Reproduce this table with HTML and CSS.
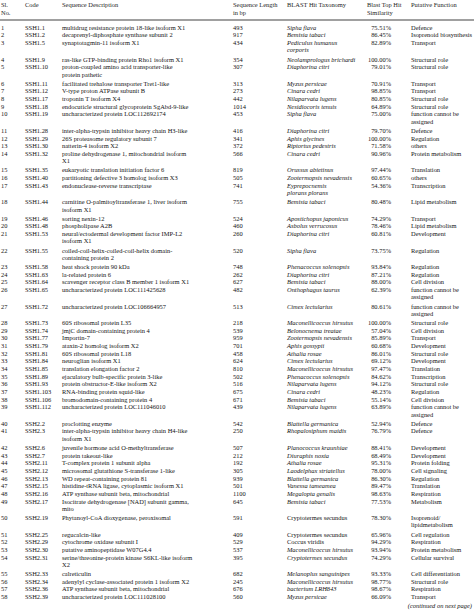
FILE: index.html
```html
<!DOCTYPE html>
<html>
<head>
<meta charset="utf-8">
<link rel="stylesheet" href="styles.css">
</head>
<body>
<div class="tbl">
  <div class="row head">
    <div>Sl.<br>No.</div><div>Code</div><div>Sequence Description</div><div>Sequence Length<br>in bp</div><div>BLAST Hit Taxonomy</div><div class="simh">Blast Top Hit<br>Similarity</div><div>Putative Function</div>
  </div>
  <div class="rule"></div>
  <div class="body">
    <div class="row"><div>1</div><div>SSH1.1</div><div>multidrug resistance protein 18-like isoform X1</div><div>493</div><div class="tx">Sipha flava</div><div class="sim">75.51%</div><div>Defence</div></div>
    <div class="row"><div>2</div><div>SSH1.2</div><div>decaprenyl-diphosphate synthase subunit 2</div><div>917</div><div class="tx">Bemisia tabaci</div><div class="sim">86.45%</div><div>Isoprenoid biosynthesis</div></div>
    <div class="row two"><div>3</div><div>SSH1.5</div><div>synaptotagmin-11 isoform X1</div><div>434</div><div class="tx">Pediculus humanus<br>corporis</div><div class="sim">82.89%</div><div>Transport</div></div>
    <div class="row"><div>4</div><div>SSH1.9</div><div>ras-like GTP-binding protein Rho1 isoform X1</div><div>354</div><div class="tx">Neolamprologus brichardi</div><div class="sim">100.00%</div><div>Structural role</div></div>
    <div class="row two"><div>5</div><div>SSH1.10</div><div>proton-coupled amino acid transporter-like<br>protein pathetic</div><div>307</div><div class="tx">Diaphorina citri</div><div class="sim">79.01%</div><div>Structural role</div></div>
    <div class="row"><div>6</div><div>SSH1.11</div><div>facilitated trehalose transporter Tret1-like</div><div>313</div><div class="tx">Myzus persicae</div><div class="sim">70.91%</div><div>Transport</div></div>
    <div class="row"><div>7</div><div>SSH1.12</div><div>V-type proton ATPase subunit B</div><div>273</div><div class="tx">Cinara cedri</div><div class="sim">98.85%</div><div>Transport</div></div>
    <div class="row"><div>8</div><div>SSH1.17</div><div>troponin T isoform X4</div><div>442</div><div class="tx">Nilaparvata lugens</div><div class="sim">80.85%</div><div>Structural role</div></div>
    <div class="row"><div>9</div><div>SSH1.18</div><div>endocuticle structural glycoprotein SgAbd-9-like</div><div>1014</div><div class="tx">Nesidiocoris tenuis</div><div class="sim">64.89%</div><div>Structural role</div></div>
    <div class="row two"><div>10</div><div>SSH1.19</div><div>uncharacterized protein LOC112692174</div><div>453</div><div class="tx">Sipha flava</div><div class="sim">75.00%</div><div>function cannot be<br>assigned</div></div>
    <div class="row"><div>11</div><div>SSH1.28</div><div>inter-alpha-trypsin inhibitor heavy chain H3-like</div><div>416</div><div class="tx">Diaphorina citri</div><div class="sim">79.70%</div><div>Defence</div></div>
    <div class="row"><div>12</div><div>SSH1.29</div><div>26S proteasome regulatory subunit 7</div><div>341</div><div class="tx">Aphis glycines</div><div class="sim">100.00%</div><div>Regulation</div></div>
    <div class="row"><div>13</div><div>SSH1.30</div><div>natterin-4 isoform X2</div><div>372</div><div class="tx">Riptortus pedestris</div><div class="sim">71.58%</div><div>others</div></div>
    <div class="row two"><div>14</div><div>SSH1.32</div><div>proline dehydrogenase 1, mitochondrial isoform<br>X1</div><div>566</div><div class="tx">Cinara cedri</div><div class="sim">90.96%</div><div>Protein metabolism</div></div>
    <div class="row"><div>15</div><div>SSH1.35</div><div>eukaryotic translation initiation factor 6</div><div>819</div><div class="tx">Orussus abietinus</div><div class="sim">97.44%</div><div>Translation</div></div>
    <div class="row"><div>16</div><div>SSH1.40</div><div>partitioning defective 3 homolog isoform X3</div><div>505</div><div class="tx">Zootermopsis nevadensis</div><div class="sim">60.65%</div><div>others</div></div>
    <div class="row two"><div>17</div><div>SSH1.43</div><div>endonuclease-reverse transcriptase</div><div>741</div><div class="tx">Eyprepocnemis<br>plorans plorans</div><div class="sim">54.36%</div><div>Transcription</div></div>
    <div class="row two"><div>18</div><div>SSH1.44</div><div>carnitine O-palmitoyltransferase 1, liver isoform<br>isoform X1</div><div>755</div><div class="tx">Bemisia tabaci</div><div class="sim">80.48%</div><div>Lipid metabolism</div></div>
    <div class="row"><div>19</div><div>SSH1.46</div><div>sorting nexin-12</div><div>524</div><div class="tx">Apostichopus japonicus</div><div class="sim">74.29%</div><div>Transport</div></div>
    <div class="row"><div>20</div><div>SSH1.48</div><div>phospholipase A2B</div><div>460</div><div class="tx">Asbolus verrucosus</div><div class="sim">78.46%</div><div>Lipid metabolism</div></div>
    <div class="row two"><div>21</div><div>SSH1.53</div><div>neural/ectodermal development factor IMP-L2<br>isoform X1</div><div>260</div><div class="tx">Diaphorina citri</div><div class="sim">60.81%</div><div>Development</div></div>
    <div class="row two"><div>22</div><div>SSH1.55</div><div>coiled-coil-helix-coiled-coil-helix domain-<br>containing protein 2</div><div>520</div><div class="tx">Sipha flava</div><div class="sim">73.75%</div><div>Regulation</div></div>
    <div class="row"><div>23</div><div>SSH1.58</div><div>heat shock protein 90 kDa</div><div>748</div><div class="tx">Phenacoccus solenopsis</div><div class="sim">93.84%</div><div>Regulation</div></div>
    <div class="row"><div>24</div><div>SSH1.63</div><div>la-related protein 6</div><div>262</div><div class="tx">Diaphorina citri</div><div class="sim">87.21%</div><div>Regulation</div></div>
    <div class="row"><div>25</div><div>SSH1.64</div><div>scavenger receptor class B member 1 isoform X1</div><div>627</div><div class="tx">Bemisia tabaci</div><div class="sim">88.00%</div><div>Cell division</div></div>
    <div class="row two"><div>26</div><div>SSH1.65</div><div>uncharacterized protein LOC111425628</div><div>482</div><div class="tx">Onthophagus taurus</div><div class="sim">62.39%</div><div>function cannot be<br>assigned</div></div>
    <div class="row two"><div>27</div><div>SSH1.72</div><div>uncharacterized protein LOC106664957</div><div>513</div><div class="tx">Cimex lectularius</div><div class="sim">80.61%</div><div>function cannot be<br>assigned</div></div>
    <div class="row"><div>28</div><div>SSH1.73</div><div>60S ribosomal protein L35</div><div>218</div><div class="tx">Maconellicoccus hirsutus</div><div class="sim">100.00%</div><div>Structural role</div></div>
    <div class="row"><div>29</div><div>SSH1.74</div><div>jmjC domain-containing protein 4</div><div>539</div><div class="tx">Belonocnema treatae</div><div class="sim">57.04%</div><div>Cell division</div></div>
    <div class="row"><div>30</div><div>SSH1.77</div><div>Importin-7</div><div>959</div><div class="tx">Zootermopsis nevadensis</div><div class="sim">85.89%</div><div>Transport</div></div>
    <div class="row"><div>31</div><div>SSH1.79</div><div>ataxin-2 homolog isoform X2</div><div>701</div><div class="tx">Aphis gossypii</div><div class="sim">60.68%</div><div>Development</div></div>
    <div class="row"><div>32</div><div>SSH1.81</div><div>60S ribosomal protein L18</div><div>458</div><div class="tx">Athalia rosae</div><div class="sim">86.01%</div><div>Structural role</div></div>
    <div class="row"><div>33</div><div>SSH1.84</div><div>neuroglian isoform X1</div><div>624</div><div class="tx">Cimex lectularius</div><div class="sim">69.12%</div><div>Development</div></div>
    <div class="row"><div>34</div><div>SSH1.85</div><div>translation elongation factor 2</div><div>810</div><div class="tx">Maconellicoccus hirsutus</div><div class="sim">97.47%</div><div>Translation</div></div>
    <div class="row"><div>35</div><div>SSH1.89</div><div>ejaculatory bulb-specific protein 3-like</div><div>502</div><div class="tx">Phenacoccus solenopsis</div><div class="sim">84.62%</div><div>Transcription</div></div>
    <div class="row"><div>36</div><div>SSH1.93</div><div>protein obstructor-E-like isoform X2</div><div>516</div><div class="tx">Nilaparvata lugens</div><div class="sim">94.12%</div><div>Structural role</div></div>
    <div class="row"><div>37</div><div>SSH1.103</div><div>RNA-binding protein squid-like</div><div>675</div><div class="tx">Cinara cedri</div><div class="sim">48.23%</div><div>Regulation</div></div>
    <div class="row"><div>38</div><div>SSH1.106</div><div>bromodomain-containing protein 4</div><div>671</div><div class="tx">Bemisia tabaci</div><div class="sim">55.14%</div><div>Cell division</div></div>
    <div class="row two"><div>39</div><div>SSH1.112</div><div>uncharacterized protein LOC111046010</div><div>439</div><div class="tx">Nilaparvata lugens</div><div class="sim">63.89%</div><div>function cannot be<br>assigned</div></div>
    <div class="row"><div>40</div><div>SSH2.2</div><div>proclotting enzyme</div><div>542</div><div class="tx">Blattella germanica</div><div class="sim">52.94%</div><div>Defence</div></div>
    <div class="row two"><div>41</div><div>SSH2.3</div><div>inter-alpha-trypsin inhibitor heavy chain H4-like<br>isoform X1</div><div>250</div><div class="tx">Rhopalosiphum maidis</div><div class="sim">76.79%</div><div>Defence</div></div>
    <div class="row"><div>42</div><div>SSH2.6</div><div>juvenile hormone acid O-methyltransferase</div><div>507</div><div class="tx">Planococcus kraunhiae</div><div class="sim">88.41%</div><div>Development</div></div>
    <div class="row"><div>43</div><div>SSH2.7</div><div>protein takeout-like</div><div>212</div><div class="tx">Diuraphis noxia</div><div class="sim">68.49%</div><div>Development</div></div>
    <div class="row"><div>44</div><div>SSH2.11</div><div>T-complex protein 1 subunit alpha</div><div>192</div><div class="tx">Athalia rosae</div><div class="sim">95.31%</div><div>Protein folding</div></div>
    <div class="row"><div>45</div><div>SSH2.12</div><div>microsomal glutathione S-transferase 1-like</div><div>305</div><div class="tx">Laodelphax striatellus</div><div class="sim">78.00%</div><div>Cell signaling</div></div>
    <div class="row"><div>46</div><div>SSH2.13</div><div>WD repeat-containing protein 81</div><div>939</div><div class="tx">Blattella germanica</div><div class="sim">86.30%</div><div>Regulation</div></div>
    <div class="row"><div>47</div><div>SSH2.15</div><div>histidine-tRNA ligase, cytoplasmic isoform X1</div><div>501</div><div class="tx">Vanessa tameamea</div><div class="sim">89.47%</div><div>Translation</div></div>
    <div class="row"><div>48</div><div>SSH2.16</div><div>ATP synthase subunit beta, mitochondrial</div><div>1100</div><div class="tx">Megalopta genalis</div><div class="sim">98.63%</div><div>Respiration</div></div>
    <div class="row two"><div>49</div><div>SSH2.17</div><div>Isocitrate dehydrogenase [NAD] subunit gamma,<br>mito</div><div>645</div><div class="tx">Bemisia tabaci</div><div class="sim">77.53%</div><div>Metabolism</div></div>
    <div class="row two"><div>50</div><div>SSH2.19</div><div>Phytanoyl-CoA dioxygenase, peroxisomal</div><div>591</div><div>Cryptotermes secundus</div><div class="sim">78.30%</div><div>Isoprenoid/<br>lipidmetabolism</div></div>
    <div class="row"><div>51</div><div>SSH2.25</div><div>regucalcin-like</div><div>409</div><div>Cryptotermes secundus</div><div class="sim">65.96%</div><div>Cell regulation</div></div>
    <div class="row"><div>52</div><div>SSH2.29</div><div>cytochrome oxidase subunit I</div><div>529</div><div>Coccus viridis</div><div class="sim">94.29%</div><div>Respiration</div></div>
    <div class="row"><div>53</div><div>SSH2.30</div><div>putative aminopeptidase W07G4.4</div><div>537</div><div class="tx">Maconellicoccus hirsutus</div><div class="sim">93.94%</div><div>Protein metabolism</div></div>
    <div class="row two"><div>54</div><div>SSH2.31</div><div>serine/threonine-protein kinase S6KL-like isoform<br>X2</div><div>395</div><div class="tx">Cryptotermes secundus</div><div class="sim">74.29%</div><div>Cellular survival</div></div>
    <div class="row"><div>55</div><div>SSH2.33</div><div>calreticulin</div><div>682</div><div class="tx">Melanoplus sanguinipes</div><div class="sim">93.33%</div><div>Cell differentiation</div></div>
    <div class="row"><div>56</div><div>SSH2.34</div><div>adenylyl cyclase-associated protein 1 isoform X2</div><div>245</div><div class="tx">Maconellicoccus hirsutus</div><div class="sim">98.77%</div><div>Structural role</div></div>
    <div class="row"><div>57</div><div>SSH2.36</div><div>ATP synthase subunit beta, mitochondrial</div><div>676</div><div class="tx">bacterium LRH843</div><div class="sim">98.67%</div><div>Respiration</div></div>
    <div class="row"><div>58</div><div>SSH2.39</div><div>uncharacterized protein LOC111028100</div><div>560</div><div class="tx">Myzus persicae</div><div class="sim">66.09%</div><div>Transport</div></div>
  </div>
  <div class="cont">(continued on next page)</div>
</div>
</body>
</html>
```

FILE: styles.css
```css
html, body {
  margin: 0;
  padding: 0;
  background: #ffffff;
}
.tbl {
  width: 474px;
  font-family: "Liberation Serif", "Times New Roman", serif;
  font-size: 6.45px;
  color: #141414;
}
.row {
  display: grid;
  grid-template-columns: 25px 37px 171px 54px 80px 44px 63px;
  line-height: 7.4px;
  padding-top: 0.25px;
  white-space: nowrap;
}
.row > div:first-child {
  padding-left: 1px;
}
.row.two {
  padding-bottom: 1.46px;
}
.head {
  line-height: 8px;
  padding-top: 1px;
  color: #262626;
}
.rule {
  height: 2px;
  margin-top: 2px;
  background: #a0a0a0;
}
.body {
  padding-top: 2.5px;
}
.tx {
  font-style: italic;
}
.sim {
  text-align: right;
  padding-right: 20px;
}
.cont {
  font-style: italic;
  text-align: right;
  line-height: 8px;
  padding-top: 2px;
  padding-right: 2px;
}
```
